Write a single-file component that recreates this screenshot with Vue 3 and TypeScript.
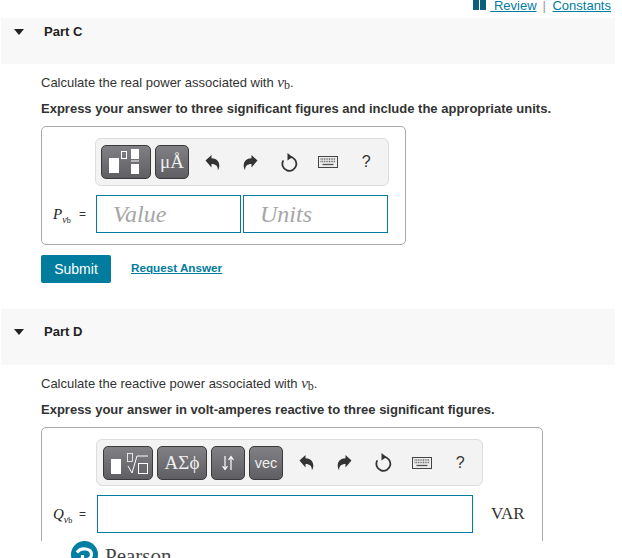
<script setup lang="ts">
const icons = true
void icons
</script>

<template>
  <div class="page">
    <div class="toplinks">
      <svg class="book" width="13" height="10" viewBox="0 0 13 10"><path d="M0 0h6v10H0zM7 0h6v10H7z" fill="#0b5f78"/></svg>
      <a class="link">&nbsp;Review</a><span class="sep">|</span><a class="link">Constants</a>
    </div>

    <div class="bar bar-c">
      <span class="tri"></span><span class="part">Part C</span>
    </div>
    <section class="body body-c">
      <p class="prompt">Calculate the real power associated with <i class="mv">v</i><span class="mb">b</span>.</p>
      <p class="instr">Express your answer to three significant figures and include the appropriate units.</p>
      <div class="box box-c">
        <div class="toolbar tb-c">
          <button class="tbtn w50">
            <svg width="34" height="26" viewBox="0 0 34 26">
              <rect x="0" y="9" width="10" height="15" fill="#fff"/>
              <rect x="12.500" y="2.500" width="5" height="7" fill="none" stroke="#fff"/>
              <rect x="22" y="0" width="8" height="10" fill="#fff"/>
              <rect x="22" y="11.500" width="8" height="1" fill="#fff"/>
              <rect x="22" y="15" width="8" height="10" fill="#fff"/>
            </svg>
          </button>
          <button class="tbtn w34 gl">μÅ</button>
          <div class="tools">
            <svg width="15" height="17" viewBox="0 0 15 17"><path d="M0.500 6.500 6.500 1v3.300c4.800.2 7.800 3 7.800 7.200 0 1.800-.5 3.500-1.400 4.800.1-4.200-2-6.300-6.400-6.300V13.500z" fill="#333"/></svg>
            <svg width="15" height="17" viewBox="0 0 15 17"><path d="M14.500 6.500 8.500 1v3.300C3.700 4.500.7 7.300.7 11.500c0 1.800.5 3.500 1.400 4.800-.1-4.200 2-6.300 6.400-6.300V13.500z" fill="#333"/></svg>
            <svg width="18" height="19" viewBox="0 0 18 19"><path d="M9.500 3.900a7 7 0 1 1-6.200 3.500" fill="none" stroke="#333" stroke-width="1.800"/><path d="M7.500 0 12.500 3.900 7.500 7.500z" fill="#333"/></svg>
            <svg width="20" height="12" viewBox="0 0 20 12"><rect x=".5" y=".5" width="19" height="11" fill="#eee" stroke="#444"/><path d="M2.500 3h15M2.500 5.500h15" stroke="#666" stroke-width="1.300" stroke-dasharray="1 .7"/><path d="M4.500 8.500h11" stroke="#555" stroke-width="1.300"/></svg>
            <span class="q">?</span>
          </div>
        </div>
        <div class="answer ans-c">
          <span class="lbl"><i>P</i><sub><i>v</i><span class="tiny">b</span></sub></span><span class="eq">=</span>
          <div class="field f-val ph">Value</div>
          <div class="field f-unit ph">Units</div>
        </div>
      </div>
      <div class="actions">
        <button class="submit">Submit</button>
        <a class="req">Request Answer</a>
      </div>
    </section>

    <div class="bar bar-d">
      <span class="tri"></span><span class="part">Part D</span>
    </div>
    <section class="body body-d">
      <p class="prompt">Calculate the reactive power associated with <i class="mv">v</i><span class="mb">b</span>.</p>
      <p class="instr">Express your answer in volt-amperes reactive to three significant figures.</p>
      <div class="box box-d">
        <div class="toolbar tb-d">
          <button class="tbtn w50">
            <svg width="40" height="26" viewBox="0 0 40 26">
              <rect x="3" y="9" width="10" height="15" fill="#fff"/>
              <rect x="19.500" y="3.500" width="5" height="8" fill="none" stroke="#fff" stroke-width=".8"/>
              <path d="M20 16l4 7 5-17h11" fill="none" stroke="#fff"/>
              <rect x="30.500" y="13.500" width="9" height="10" fill="none" stroke="#fff"/>
            </svg>
          </button>
          <button class="tbtn w50 gl">ΑΣϕ</button>
          <button class="tbtn w34">
            <svg width="14" height="16" viewBox="0 0 14 16"><path d="M4 1v13M1.500 11 4 14.500 6.500 11M10 15V2M7.500 5 10 1.500 12.500 5" fill="none" stroke="#fff" stroke-width="1.200"/></svg>
          </button>
          <button class="tbtn w34 vec">vec</button>
          <div class="tools">
            <svg width="15" height="17" viewBox="0 0 15 17"><path d="M0.500 6.500 6.500 1v3.300c4.800.2 7.800 3 7.800 7.200 0 1.800-.5 3.500-1.400 4.800.1-4.200-2-6.300-6.400-6.300V13.500z" fill="#333"/></svg>
            <svg width="15" height="17" viewBox="0 0 15 17"><path d="M14.500 6.500 8.500 1v3.300C3.700 4.500.7 7.300.7 11.500c0 1.800.5 3.500 1.400 4.800-.1-4.200 2-6.300 6.400-6.300V13.500z" fill="#333"/></svg>
            <svg width="18" height="19" viewBox="0 0 18 19"><path d="M9.500 3.900a7 7 0 1 1-6.200 3.500" fill="none" stroke="#333" stroke-width="1.800"/><path d="M7.500 0 12.500 3.900 7.500 7.500z" fill="#333"/></svg>
            <svg width="20" height="12" viewBox="0 0 20 12"><rect x=".5" y=".5" width="19" height="11" fill="#eee" stroke="#444"/><path d="M2.500 3h15M2.500 5.500h15" stroke="#666" stroke-width="1.300" stroke-dasharray="1 .7"/><path d="M4.500 8.500h11" stroke="#555" stroke-width="1.300"/></svg>
            <span class="q">?</span>
          </div>
        </div>
        <div class="answer ans-d">
          <span class="lbl"><i>Q</i><sub><i>v</i><span class="tiny">b</span></sub></span><span class="eq">=</span>
          <div class="field f-wide"></div>
          <span class="var">VAR</span>
        </div>
      </div>
    </section>
    <div class="pearson">
      <svg class="plogo" width="27" height="27" viewBox="0 0 27 27">
        <circle cx="13.500" cy="13.500" r="13.500" fill="#007fa3"/>
        <path d="M6 11.500C8 8.500 11.500 7.500 15 8c3.500.6 5.500 2.600 5.500 5.500s-2.500 5-6 5.300M11.500 14v11" fill="none" stroke="#fff" stroke-width="3.200"/>
      </svg>
      <span class="pname">Pearson</span>
    </div>
  </div>
</template>

<style>
html, body { margin: 0; padding: 0; background: #fff; overflow: hidden; }
</style>

<style scoped>
.page {
  width: 622px;
  height: 558px;
  overflow: hidden;
  font-family: "Liberation Sans", Arial, sans-serif;
  color: #333;
  font-size: 13px;
}
.toplinks {
  height: 18px;
  width: 611px;
  display: flex;
  justify-content: flex-end;
  align-items: flex-start;
  font-size: 13px;
  line-height: 12px;
}
.book { margin-right: 4px; }
.link { color: #007c9e; text-decoration: underline; }
.sep { color: #999; margin: 0 6.500px 0 6px; }
.bar {
  width: 614px;
  margin-left: 1px;
  background: #f8f8f8;
  display: flex;
  align-items: flex-start;
  box-sizing: border-box;
  color: #222;
}
.bar-c { height: 46px; padding-top: 6px; }
.bar-d { height: 56px; padding-top: 15px; }
.tri {
  width: 0; height: 0;
  margin: 5px 0 0 13px;
  border-left: 5px solid transparent;
  border-right: 5px solid transparent;
  border-top: 6px solid #222;
}
.part { margin-left: 20px; font-weight: 700; font-size: 13px; line-height: 15px; }
.body { padding-left: 41px; box-sizing: border-box; }
p { margin: 0; }
.prompt { line-height: 15px; padding-top: 11px; }
.instr { font-weight: 700; line-height: 15px; padding-top: 10px; }
.mv { font-family: "Liberation Serif", serif; font-size: 15px; }
.mb { font-family: "Liberation Serif", serif; font-size: 12px; position: relative; top: 2px; }
.box {
  box-sizing: border-box;
  border: 1px solid #aaa;
  border-radius: 5px;
  background: #fff;
}
.box-c { width: 365px; height: 119px; margin-top: 10px; padding-top: 11px; }
.box-d { width: 502px; height: 130px; margin-top: 10px; padding-top: 11px; }
.toolbar {
  box-sizing: border-box;
  background: #f3f3f3;
  border: 1px solid #ddd;
  border-radius: 6px;
  display: flex;
  align-items: center;
  gap: 4px;
}
.tb-c { width: 294px; height: 48px; margin-left: 53px; padding-left: 5px; }
.tb-d { width: 387px; height: 47px; margin-left: 54px; padding-left: 6px; }
.tbtn {
  box-sizing: border-box;
  height: 34px;
  padding: 0;
  border: 1px solid #3a3a3a;
  border-radius: 5px;
  background: linear-gradient(#808085, #5f5f63);
  display: flex;
  align-items: center;
  justify-content: center;
  color: #eee;
}
.w50 { width: 50px; }
.w34 { width: 34px; }
.gl { font-family: "Liberation Serif", serif; font-size: 19px; }
.vec { font-family: "Liberation Sans", sans-serif; font-size: 14.500px; }
.tools {
  display: grid;
  grid-template-columns: repeat(5, 38.500px);
  justify-items: center;
  align-items: center;
}
.q { font-size: 16px; color: #333; }
.answer { display: flex; align-items: center; }
.ans-c { margin-top: 9px; height: 38px; }
.ans-d { margin-top: 9px; height: 38px; }
.lbl { font-family: "Liberation Serif", serif; font-size: 15px; color: #222; width: 26px; margin-left: 11px; white-space: nowrap; }
.lbl sub { font-size: 10px; line-height: 0; }
.tiny { font-size: 8px; }
.eq { font-size: 12px; width: 17px; }
.field {
  box-sizing: border-box;
  height: 38px;
  border: 1px solid #007c9e;
  background: #fff;
}
.ph {
  font-family: "Liberation Serif", serif;
  font-style: italic;
  font-size: 24px;
  color: #a6a6a6;
  line-height: 36px;
  padding-left: 16px;
}
.f-val { width: 145px; }
.f-unit { width: 145px; margin-left: 2px; }
.ans-d .eq { width: 18px; }
.f-wide { width: 376px; }
.var { font-family: "Liberation Serif", serif; font-size: 17px; margin-left: 18px; color: #333; }
.actions { display: flex; align-items: center; margin-top: 10px; height: 28px; }
.submit {
  width: 70px; height: 28px;
  border: 0; border-radius: 2px;
  background: #007c9e;
  color: #fff;
  font-family: "Liberation Sans", sans-serif;
  font-size: 14px;
  padding: 0;
}
.req { margin-left: 20px; margin-top: -3px; color: #007c9e; text-decoration: underline; font-weight: 700; font-size: 11.700px; }
.body-c { height: 245px; }
.body-d { height: 176px; overflow: hidden; }
.pearson { display: flex; align-items: flex-start; padding-left: 71px; height: 17px; overflow: hidden; }
.plogo { flex: none; }
.pname { font-family: "Liberation Serif", serif; font-size: 21px; color: #444; margin-left: 7px; line-height: 24px; margin-top: 3px; }
</style>
